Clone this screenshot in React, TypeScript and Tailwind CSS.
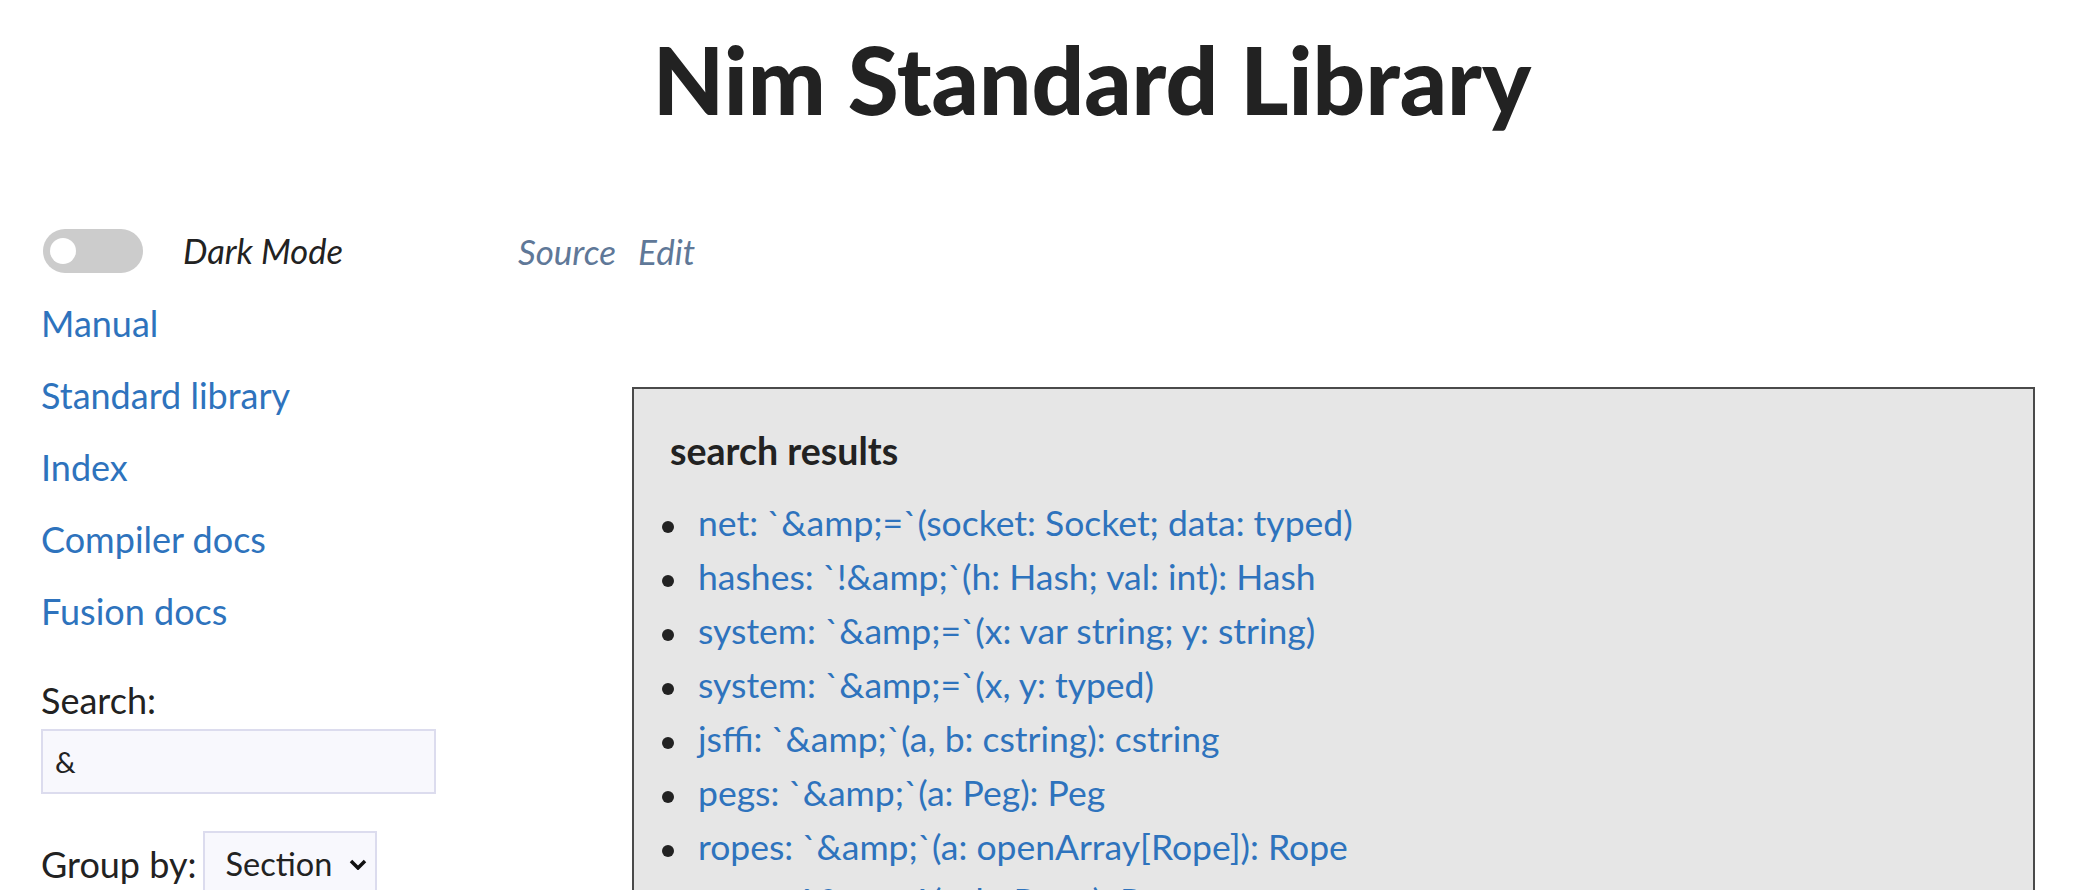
import React from "react";

const results = [
  "net: `&amp;=`(socket: Socket; data: typed)",
  "hashes: `!&amp;`(h: Hash; val: int): Hash",
  "system: `&amp;=`(x: var string; y: string)",
  "system: `&amp;=`(x, y: typed)",
  "jsffi: `&amp;`(a, b: cstring): cstring",
  "pegs: `&amp;`(a: Peg): Peg",
  "ropes: `&amp;`(a: openArray[Rope]): Rope",
  "ropes: `&amp;`(a, b: Rope): Rope",
];

const links = ["Manual", "Standard library", "Index", "Compiler docs", "Fusion docs"];

export default function App() {
  return (
    <div className="h-[890px] w-[2088px] overflow-hidden bg-white font-['Lato',sans-serif] text-[#222]">
      <h1 className="mt-[34px] pl-[96px] text-center text-[92.5px] leading-[92px] font-black">
        Nim Standard Library
      </h1>
      <div className="mt-[103px] flex">
        <div className="w-[518px] shrink-0 pl-[41px]">
          <div className="flex h-[44px] items-center">
            <div className="ml-[2px] flex h-[44px] w-[100px] items-center rounded-full bg-[#cccccc]">
              <div className="ml-[7px] h-[26px] w-[26px] rounded-full bg-white" />
            </div>
            <em className="ml-[40px] text-[34.5px] leading-[44px]">Dark Mode</em>
          </div>
          <div className="mt-[14px] flex flex-col">
            {links.map((l) => (
              <a key={l} className="block h-[72px] text-[36px] leading-[72px] text-[#2e73bd]">
                {l}
              </a>
            ))}
          </div>
          <div className="mt-[26px] text-[36px] leading-[54px]">Search:</div>
          <div className="mt-[2px] flex h-[65px] w-[395px] items-center border-2 border-[#dcdcee] bg-[#f8f8fd] pl-[12px] text-[29px]">
            &amp;
          </div>
          <div className="mt-[37px] flex items-start">
            <span className="pt-[6px] text-[36px] leading-[54px]">Group by:</span>
            <div className="ml-[6px] flex h-[80px] w-[174px] items-start border-2 border-[#dcdcee] bg-[#f8f8fd] pl-[21px] pt-[4px]">
              <span className="text-[32.5px] leading-[54px]">Section</span>
              <svg className="ml-auto mr-[8px] mt-[22px]" width="18" height="11" viewBox="0 0 18 11">
                <polyline points="2,2 9,9 16,2" fill="none" stroke="#111" strokeWidth="3.5" />
              </svg>
            </div>
          </div>
        </div>
        <div className="flex-1">
          <div className="flex h-[44px] items-center text-[35px] italic text-[#5f7898]">
            <a>Source</a>
            <a className="ml-[22px]">Edit</a>
          </div>
          <div className="ml-[114px] mr-[53px] mt-[114px] h-[700px] border-2 border-[#4a4a4a] bg-[#e6e6e6] pl-[28px] pt-[35px]">
            <div className="pl-[8px] text-[37.5px] leading-[54px] font-bold">search results</div>
            <ul className="mt-[18px]">
              {results.map((r, i) => (
                <li key={i} className="flex h-[54px] items-center text-[35.5px] leading-[54px] text-[#2e73bd]">
                  <span className="h-[12px] w-[12px] shrink-0 translate-y-[4px] rounded-full bg-[#222]" />
                  <span className="ml-[24px] whitespace-nowrap">{r}</span>
                </li>
              ))}
            </ul>
          </div>
        </div>
      </div>
    </div>
  );
}
